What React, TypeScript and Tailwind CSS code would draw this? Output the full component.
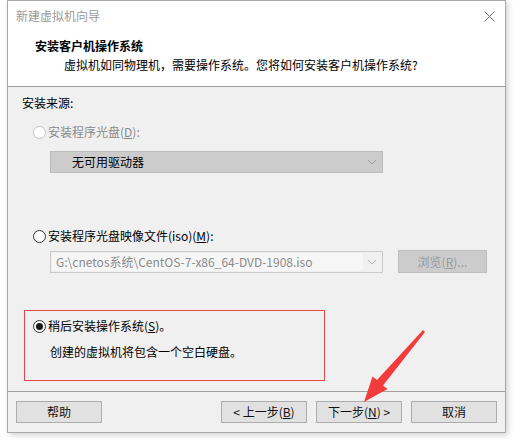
import React from 'react';

const font = { fontFamily: '"Noto Sans CJK SC", "Noto Sans", sans-serif' };

function Radio({ checked, disabled }: { checked?: boolean; disabled?: boolean }) {
  return (
    <span
      className={`flex h-[13px] w-[13px] shrink-0 items-center justify-center rounded-full border bg-white ${
        disabled ? 'border-[#c4c4c4]' : 'border-[#333333]'
      }`}
    >
      {checked ? <span className="h-[7px] w-[7px] rounded-full bg-[#1a1a1a]" /> : null}
    </span>
  );
}

function Btn({ children }: { children: React.ReactNode }) {
  return (
    <button className="flex h-[22px] w-[86px] items-center justify-center border border-[#adadad] bg-[#e1e1e1] text-[12px] text-[#111]">
      {children}
    </button>
  );
}

function Chevron({ color }: { color: string }) {
  return (
    <svg width="10" height="6" viewBox="0 0 10 6" fill="none" aria-hidden>
      <path d="M1 1l4 4 4-4" stroke={color} strokeWidth="1" />
    </svg>
  );
}

export default function App() {
  return (
    <div className="relative h-[440px] w-[513px] overflow-hidden bg-white" style={font}>
      <div className="ml-[7px] flex h-[433px] w-[499px] flex-col border border-[#a8a8a8] bg-[#f0f0f0] shadow-[2px_2px_6px_rgba(0,0,0,0.18)]">
        {/* header */}
        <div className="flex h-[86px] flex-col border-b border-[#a0a0a0] bg-white">
          <div className="flex h-[30px] items-center justify-between pl-[8px] pr-[10px]">
            <span className="text-[12px] text-[#9a9a9a]">新建虚拟机向导</span>
            <svg width="11" height="11" viewBox="0 0 11 11" aria-hidden>
              <path d="M0.5 0.5l10 10M10.5 0.5l-10 10" stroke="#707070" strokeWidth="1" />
            </svg>
          </div>
          <div className="mt-[5px] flex h-[20px] items-center pl-[27px] text-[12px] font-bold text-black">
            安装客户机操作系统
          </div>
          <div className="flex h-[17px] items-center pl-[56px] text-[12px] text-black">
            虚拟机如同物理机，需要操作系统。您将如何安装客户机操作系统?
          </div>
        </div>

        {/* body */}
        <div className="flex h-[304px] flex-col pl-[14px] text-[12px] text-black">
          <div className="flex h-[32px] items-center">安装来源:</div>

          <div className="mt-[3px] flex h-[20px] items-center gap-[2px] pl-[11px] text-[#8a8a8a]">
            <Radio disabled />
            <span>
              安装程序光盘(<span className="underline">D</span>):
            </span>
          </div>

          <div className="ml-[28px] mt-[9px] flex h-[22px] w-[333px] items-center justify-between border border-[#bdbdbd] bg-[#cccccc] pl-[21px] pr-[5px]">
            <span className="text-black">无可用驱动器</span>
            <Chevron color="#9a9a9a" />
          </div>

          <div className="mt-[53px] flex h-[20px] items-center gap-[2px] pl-[11px]">
            <Radio />
            <span>
              安装程序光盘映像文件(iso)(<span className="underline">M</span>):
            </span>
          </div>

          <div className="ml-[28px] mt-[4px] flex items-center gap-[15px]">
            <div className="flex h-[22px] w-[333px] items-center justify-between border border-[#cacaca] bg-[#f0f0f0] pr-[5px]">
              <div className="ml-[1px] flex h-[18px] w-[311px] items-center bg-[#f6f6f6] pl-[4px] text-[#8a8a8a]">
                G:\cnetos系统\CentOS-7-x86_64-DVD-1908.iso
              </div>
              <Chevron color="#b0b0b0" />
            </div>
            <div className="flex h-[23px] w-[89px] items-center justify-center border border-[#bfbfbf] bg-[#cccccc] text-[#9a9a9a]">
              浏览(<span className="underline">R</span>)...
            </div>
          </div>

          <div className="ml-[2px] mt-[37px] flex h-[71px] w-[301px] flex-col border border-[#e04a4a] pl-[8px] pt-[5px]">
            <div className="flex h-[20px] items-center gap-[2px]">
              <Radio checked />
              <span>
                稍后安装操作系统(<span className="underline">S</span>)。
              </span>
            </div>
            <div className="mt-[6px] flex h-[20px] items-center pl-[17px]">
              创建的虚拟机将包含一个空白硬盘。
            </div>
          </div>
        </div>

        {/* footer */}
        <div className="flex flex-1 items-start justify-between border-t border-[#a0a0a0] px-[8px] pt-[9px]">
          <Btn>帮助</Btn>
          <div className="flex gap-[9px]">
            <Btn>
              &lt; 上一步(<span className="underline">B</span>)
            </Btn>
            <Btn>
              下一步(<span className="underline">N</span>) &gt;
            </Btn>
            <Btn>取消</Btn>
          </div>
        </div>
      </div>

      {/* annotation arrow */}
      <svg className="pointer-events-none absolute left-0 top-0" width="513" height="440" aria-hidden>
        <polygon
          points="423,330 425,332 383,385.5 387.5,389 364,402 372.5,376.5 377,380"
          fill="#f23c3c"
        />
      </svg>
    </div>
  );
}
